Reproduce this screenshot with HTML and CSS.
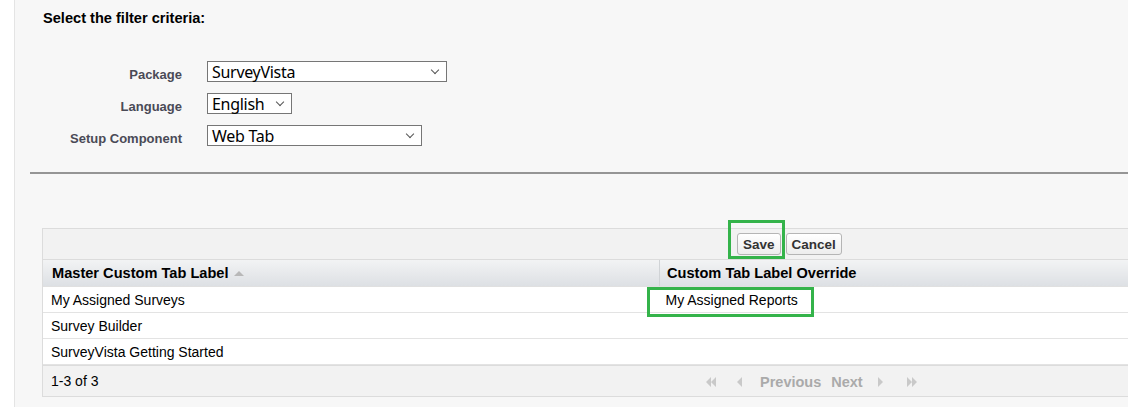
FILE: index.html
```html
<!DOCTYPE html>
<html>
<head><title>Rename Tabs and Labels</title>
<link rel="stylesheet" href="styles.css">
</head><body>
<div class="page">
<div class="gutter"></div>
<div class="main">
  <h3 class="filterTitle">Select the filter criteria:</h3>
  <div class="filterForm">
    <div class="fRow">
      <label class="fLabel">Package</label>
      <div class="fSelect wPackage"><span>SurveyVista</span><i class="caret"></i></div>
    </div>
    <div class="fRow">
      <label class="fLabel">Language</label>
      <div class="fSelect wLang"><span>English</span><i class="caret"></i></div>
    </div>
    <div class="fRow">
      <label class="fLabel">Setup Component</label>
      <div class="fSelect wComp"><span>Web Tab</span><i class="caret"></i></div>
    </div>
  </div>
  <div class="divider"></div>

  <div class="listBlock">
    <div class="btnRow">
      <span class="hl"><button class="btn">Save</button></span>
      <button class="btn">Cancel</button>
    </div>
    <table class="list">
      <tr class="headerRow">
        <th class="c1">Master Custom Tab Label <i class="sortAsc"></i></th>
        <th class="c2">Custom Tab Label Override</th>
      </tr>
      <tr><td>My Assigned Surveys</td><td class="editCell"><span class="hlBox"></span>My Assigned Reports</td></tr>
      <tr><td>Survey Builder</td><td></td></tr>
      <tr><td>SurveyVista Getting Started</td><td></td></tr>
    </table>
    <div class="paginator">
      <span class="count">1-3 of 3</span>
      <div class="pager">
        <svg class="pIcon first" width="12" height="10" viewBox="0 0 12 10"><path d="M6 0 L6 10 L1 5 Z M11 0 L11 10 L6 5 Z" fill="#c9c9c9"/></svg>
        <svg class="pIcon prev" width="6" height="10" viewBox="0 0 6 10"><path d="M6 0 L6 10 L1 5 Z" fill="#c9c9c9"/></svg>
        <span class="pText">Previous</span>
        <span class="pText">Next</span>
        <svg class="pIcon next" width="6" height="10" viewBox="0 0 6 10"><path d="M0 0 L0 10 L5 5 Z" fill="#c9c9c9"/></svg>
        <svg class="pIcon last" width="12" height="10" viewBox="0 0 12 10"><path d="M1 0 L1 10 L6 5 Z M6 0 L6 10 L11 5 Z" fill="#c9c9c9"/></svg>
      </div>
    </div>
  </div>
</div>
</div>
</body>
</html>
```

FILE: styles.css
```css
body {
  margin: 0;
  font-family: "Liberation Sans", Arial, sans-serif;
  font-size: 14px;
  color: #000;
  background-color: white;
  overflow: hidden;
}
.page {
  display: flex;
  height: 407px;
}
.gutter {
  width: 14px;
  flex: none;
  background-color: white;
  border-right: 1px solid #e4e4e4;
}
.main {
  flex: 1;
  background-color: #f7f7f7;
  overflow: hidden;
}
.filterTitle {
  margin: 0;
  padding: 10px 0 0 28px;
  font-size: 14.6px;
  font-weight: bold;
  line-height: 16px;
}
.filterForm {
  padding-top: 35px;
}
.fRow {
  display: flex;
  align-items: center;
  height: 21px;
  margin-bottom: 11px;
}
.fLabel {
  width: 167px;
  text-align: right;
  font-size: 13px;
  font-weight: bold;
  color: #4a4a56;
  padding-top: 6px;
}
.fSelect {
  margin-left: 25px;
  height: 19px;
  border: 1px solid #767676;
  background: white;
  display: flex;
  align-items: center;
  justify-content: space-between;
  padding: 0 8px 0 4px;
  font-family: "Noto Sans", "Liberation Sans", sans-serif;
  font-size: 16px;
  letter-spacing: -0.3px;
}
.wPackage {
  width: 226px;
}
.wLang {
  width: 71px;
}
.wComp {
  width: 201px;
}
.caret {
  width: 5px;
  height: 5px;
  border-right: 1px solid #555;
  border-bottom: 1px solid #555;
  transform: rotate(45deg);
  margin-top: -4px;
}
.divider {
  margin: 26px 0 0 15px;
  height: 2px;
  background-color: #959595;
}
.listBlock {
  margin: 54px 0 0 27px;
  width: 1110px;
  border: 1px solid #dcdcdc;
  background-color: #f2f2f2;
}
.btnRow {
  height: 30px;
  display: flex;
  align-items: center;
  gap: 5px;
  padding-left: 694px;
  border-bottom: 1px solid #dcdcdc;
}
.hl {
  position: relative;
  display: inline-block;
}
.hl:before {
  content: "";
  position: absolute;
  left: -9px;
  top: -13px;
  width: 51px;
  height: 33px;
  border: 3px solid #34b34a;
}
.btn {
  font-family: "Liberation Sans", Arial, sans-serif;
  font-size: 13.5px;
  font-weight: bold;
  color: #333;
  height: 22px;
  padding: 0 5px;
  border: 1px solid #b5b5b5;
  border-radius: 3px;
  background: linear-gradient(#ffffff, #ededed);
  position: relative;
}
.btn + .btn {
  padding: 0 6px;
}
.list {
  width: 100%;
  border-collapse: collapse;
  background-color: white;
}
.headerRow th {
  height: 26px;
  text-align: left;
  font-weight: bold;
  font-size: 14.6px;
  padding: 0 0 0 9px;
  background: linear-gradient(#f2f3f4, #dde0e4);
  border-bottom: 1px solid #e0e0e0;
}
.headerRow .c1 {
  width: 607px;
}
.headerRow .c2 {
  border-left: 1px solid #d0d3d6;
  padding-left: 7px;
}
.sortAsc {
  display: inline-block;
  width: 0;
  height: 0;
  border-left: 5px solid transparent;
  border-right: 5px solid transparent;
  border-bottom: 5px solid #b8b8b8;
  margin-left: 1px;
  vertical-align: 2px;
}
.list td {
  height: 25px;
  padding: 0 0 0 8px;
  border-bottom: 1px solid #e3e3e3;
  vertical-align: middle;
}
.list td.editCell {
  padding-left: 6px;
  position: relative;
}
.hlBox {
  position: absolute;
  left: -13px;
  top: 0;
  width: 161px;
  height: 24px;
  border: 3px solid #34b34a;
}
.paginator {
  height: 30px;
  display: flex;
  align-items: center;
  border-top: 1px solid #dcdcdc;
  position: relative;
}
.count {
  padding-left: 8px;
}
.pager {
  position: absolute;
  left: 662px;
  top: 8px;
  display: flex;
  align-items: center;
}
.pText {
  font-weight: bold;
  color: #aaaaaa;
  font-size: 14.5px;
  margin-right: 10px;
}
.pIcon {
  display: block;
}
.first {
  margin-right: 19px;
}
.prev {
  margin-right: 18px;
}
.next {
  margin-left: 5px;
  margin-right: 22px;
}
```
